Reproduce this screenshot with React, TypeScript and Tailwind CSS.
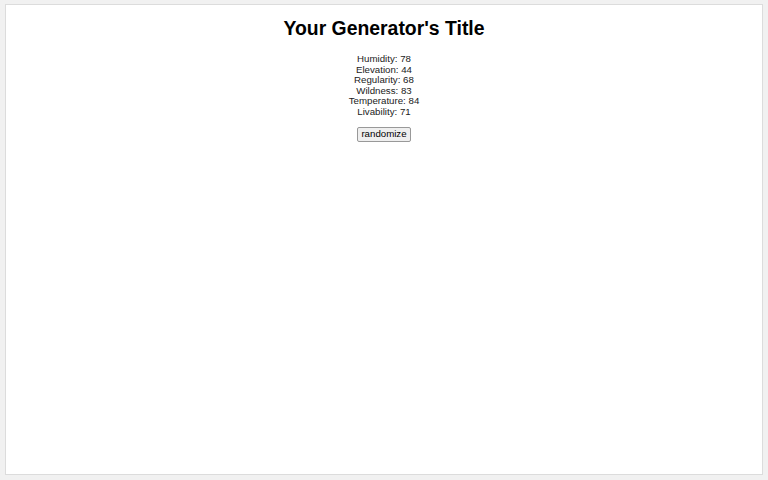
export default function App() {
  const stats: [string, number][] = [
    ["Humidity", 78],
    ["Elevation", 44],
    ["Regularity", 68],
    ["Wildness", 83],
    ["Temperature", 84],
    ["Livability", 71],
  ];
  return (
    <div
      className="h-[480px] w-[768px] bg-[#f1f1f1] pt-[4px] pl-[5px] pr-[5px] pb-[5px]"
      style={{ fontFamily: '"Liberation Sans", Arial, sans-serif' }}
    >
      <div className="h-full w-full border border-[#dcdcdc] bg-white text-center text-black">
        <h1 className="mt-[11px] text-[19.4px] font-bold leading-[24px]">Your Generator's Title</h1>
        <div className="mt-[14px] flex flex-col items-center text-[9.7px] leading-[10.6px] text-[#222]">
          {stats.map(([k, v]) => (
            <div key={k}>
              {k}: {v}
            </div>
          ))}
        </div>
        <button className="mt-[9px] h-[15px] rounded-[2px] border border-[#999] bg-[#efefef] px-[3px] text-[9.7px] leading-[12px] text-black">
          randomize
        </button>
      </div>
    </div>
  );
}
